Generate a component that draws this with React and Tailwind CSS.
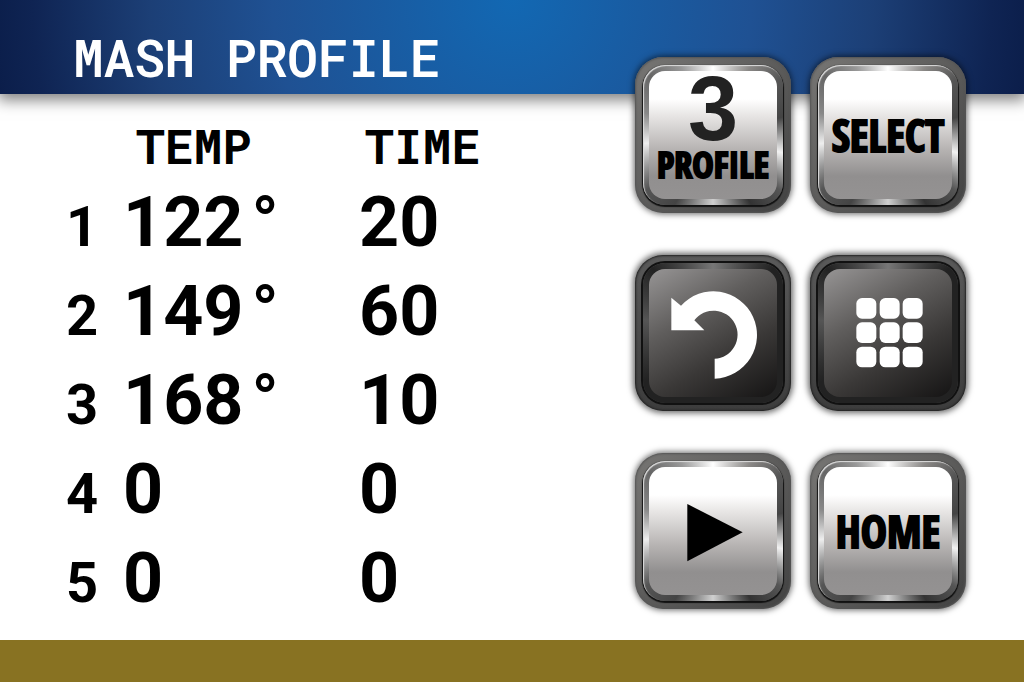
import React, { useState } from 'react';
import { clsx } from 'clsx';

const steps = [
    { id: 1, temp: 122, time: 20 },
    { id: 2, temp: 149, time: 60 },
    { id: 3, temp: 168, time: 10 },
    { id: 4, temp: 0, time: 0 },
    { id: 5, temp: 0, time: 0 },
];

const monoFont = "font-['Roboto_Mono','DejaVu_Sans_Mono',monospace]";
const keyFont = "font-['Open_Sans_Condensed','Roboto_Condensed','Liberation_Sans_Narrow','DejaVu_Sans_Condensed',sans-serif] font-extrabold [-webkit-text-stroke:2px_#000]";

// Bezel + bevel + face, light (silver) or dark (charcoal)
const PanelButton = ({ dark, label, onClick, children }) => (
    <button
        type="button"
        aria-label={label}
        onClick={onClick}
        className={clsx(
            'size-[156px] rounded-[28px] p-2 cursor-pointer',
            dark
                ? 'bg-linear-to-b from-[#5a5a5a] to-[#3c3c3c] shadow-[0_0_6px_2px_rgba(0,0,0,0.6),inset_0_0_2px_1px_#222]'
                : 'bg-linear-to-br from-[#777674] to-[#424242] shadow-[0_0_6px_1px_rgba(0,0,0,0.6),inset_0_0_2px_1px_#555]'
        )}
    >
        <span
            className={clsx(
                'block size-full rounded-[22px] p-[6px]',
                dark
                    ? 'bg-[conic-gradient(#777,#222_12%,#222_25%,#222_50%,#222_65%,#555_78%,#222_88%,#777)] shadow-[0_0_0_2px_#111]'
                    : 'bg-[conic-gradient(#fff,#8a8886_8%,#555_14%,#444_21%,#f2f2f2_29%,#555_36%,#333_42%,#d0d0d0_50%,#444_58%,#555_64%,#eee_73%,#888_80%,#666_87%,#999_93%,#fff)] shadow-[inset_1px_1px_1px_#ddd,0_1px_1px_1px_#111]'
            )}
        >
            <span
                className={clsx(
                    'flex size-full flex-col items-center justify-center rounded-[16px]',
                    dark
                        ? 'bg-linear-[150deg,#979595_0%,#605e5d_35%,#3a3837_65%,#151414_100%]'
                        : 'bg-linear-[180deg,#fff_0%,#fff_22%,#e9e7e6_34%,#b5b2b1_62%,#918f8f_82%,#949292_100%]'
                )}
            >
                {children}
            </span>
        </span>
    </button>
);

const UndoIcon = () => (
    <svg viewBox="86 86 384 384" className="size-full" fill="#fff">
        <path d="M283 415V355A72 72 0 1 0 222 240L252 270H153V172L182 196A131 131 0 1 1 283 415Z" />
    </svg>
);

const GridIcon = () => (
    <svg viewBox="72 88 384 384" className="size-full" fill="#fff">
        {[175, 248, 321].map(y =>
            [169, 239, 308].map(x => <rect key={`${x}-${y}`} x={x} y={y} width="60" height="62" rx="17" />)
        )}
    </svg>
);

const PlayIcon = () => (
    <svg viewBox="86 79 384 384" className="size-full" fill="#000">
        <path d="M201 190V362L367 275Z" />
    </svg>
);

const App = () => {
    const [profile, setProfile] = useState(3);

    return (
        <div className="flex min-h-screen flex-col bg-white text-black">
            <header className="bg-[radial-gradient(ellipse_52%_560%_at_50%_0%,#1268b3_0%,#1f5193_45%,#1c3f76_68%,#0f2453_90%,#0a1c48_100%)] pt-7 pb-[6px] pl-[73px] shadow-[0_4px_14px_2px_rgba(0,0,0,0.5)]">
                <h1 className={clsx(monoFont, 'text-[51px] leading-[60px] font-semibold text-white')}>MASH PROFILE</h1>
            </header>

            <main className="flex flex-1 items-start pr-[58px] pb-[17px] pl-[66px]">
                <table className="flex-1 table-fixed font-[Roboto,sans-serif] font-bold">
                    <thead>
                        <tr className={clsx(monoFont, 'text-left text-[48px] leading-[60px]')}>
                            <th aria-label="Step" className="w-[57px] p-0"></th>
                            <th className="w-[236px] p-0 pt-[22px] pb-[2px] pl-[13px] font-bold">TEMP</th>
                            <th className="p-0 pt-[22px] pb-[2px] pl-[6px] font-bold">TIME</th>
                        </tr>
                    </thead>
                    <tbody>
                        {steps.map(step => (
                            <tr key={step.id} className="text-[70px] leading-[89px]">
                                <td className="p-0 align-baseline text-[56px] leading-[70px]">{step.id}</td>
                                <td className="p-0 align-baseline">
                                    {step.temp}
                                    {step.temp > 0 && <span className="ml-2">°</span>}
                                </td>
                                <td className="p-0 align-baseline">{step.time}</td>
                            </tr>
                        ))}
                    </tbody>
                </table>

                <nav className="relative z-10 -mt-[37px] grid shrink-0 grid-cols-2 gap-x-[19px] gap-y-[42px]">
                    <PanelButton label={`Profile ${profile}`} onClick={() => setProfile(profile % 5 + 1)}>
                        <span className="font-['Liberation_Sans',Arial,sans-serif] text-[90px] leading-[72px] font-bold text-[#222]">{profile}</span>
                        <span className={clsx(keyFont, 'mb-3 text-[36px] leading-[40px]')}>PROFILE</span>
                    </PanelButton>
                    <PanelButton label="Select">
                        <span className={clsx(keyFont, 'text-[44px] leading-[48px]')}>SELECT</span>
                    </PanelButton>
                    <PanelButton dark label="Back"><UndoIcon /></PanelButton>
                    <PanelButton dark label="Menu"><GridIcon /></PanelButton>
                    <PanelButton label="Start"><PlayIcon /></PanelButton>
                    <PanelButton label="Home">
                        <span className={clsx(keyFont, 'text-[44px] leading-[48px]')}>HOME</span>
                    </PanelButton>
                </nav>
            </main>

            <footer className="h-[42px] bg-[#887222]" />
        </div>
    );
};

export default App;
